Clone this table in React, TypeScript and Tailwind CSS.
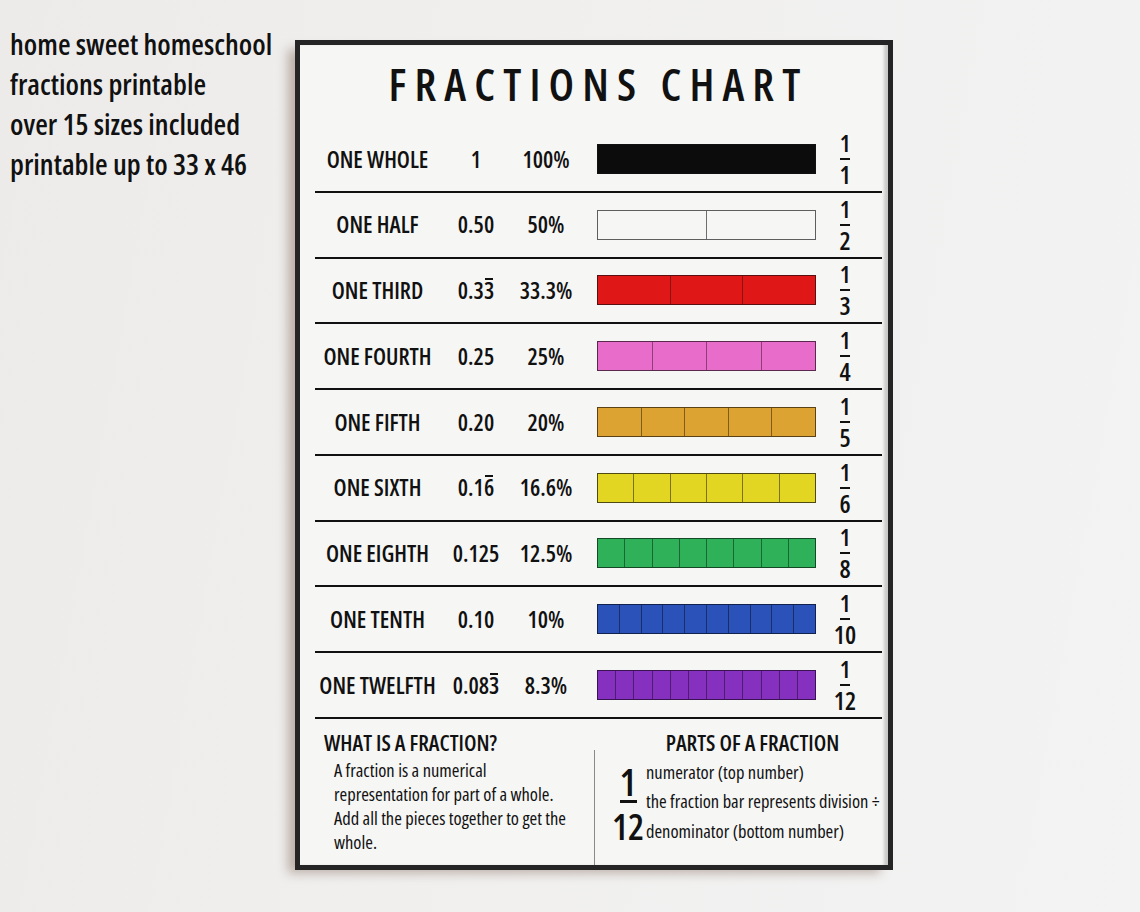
import React from "react";

type Row = {
  name: string;
  dec: React.ReactNode;
  pct: string;
  n: number;
  fill: string;
  edge: string;
  seg: string;
  den: string;
};

function Over({ d }: { d: string }) {
  return (
    <span className="relative inline-block">
      {d}
      <span className="absolute left-[1px] right-[1px] top-[5px] h-[2px] bg-[#111]" />
    </span>
  );
}

const rows: Row[] = [
  { name: "ONE WHOLE", dec: "1", pct: "100%", n: 1, fill: "bg-[#0c0c0c]", edge: "border-[#111]", seg: "border-[#111]", den: "1" },
  { name: "ONE HALF", dec: "0.50", pct: "50%", n: 2, fill: "bg-[#f6f6f4]", edge: "border-[#5e5e5e]", seg: "border-[#6e6e6e]", den: "2" },
  { name: "ONE THIRD", dec: <>0.3<Over d="3" /></>, pct: "33.3%", n: 3, fill: "bg-[#e01717]", edge: "border-[#5a1010]", seg: "border-[#8a1414]", den: "3" },
  { name: "ONE FOURTH", dec: "0.25", pct: "25%", n: 4, fill: "bg-[#e86cc9]", edge: "border-[#5a2a4e]", seg: "border-[#8c3f78]", den: "4" },
  { name: "ONE FIFTH", dec: "0.20", pct: "20%", n: 5, fill: "bg-[#dca232]", edge: "border-[#5a4214]", seg: "border-[#7e5c1c]", den: "5" },
  { name: "ONE SIXTH", dec: <>0.1<Over d="6" /></>, pct: "16.6%", n: 6, fill: "bg-[#e2d622]", edge: "border-[#4f4a10]", seg: "border-[#7a7214]", den: "6" },
  { name: "ONE EIGHTH", dec: "0.125", pct: "12.5%", n: 8, fill: "bg-[#2fb15a]", edge: "border-[#134a25]", seg: "border-[#1c6634]", den: "8" },
  { name: "ONE TENTH", dec: "0.10", pct: "10%", n: 10, fill: "bg-[#2a52b9]", edge: "border-[#12224e]", seg: "border-[#182f6a]", den: "10" },
  { name: "ONE TWELFTH", dec: <>0.08<Over d="3" /></>, pct: "8.3%", n: 12, fill: "bg-[#8630c0]", edge: "border-[#3a1452]", seg: "border-[#4f1c70]", den: "12" },
];

function Bar({ r }: { r: Row }) {
  return (
    <div className={`ml-[17px] flex h-[30px] w-[219px] shrink-0 border ${r.edge} ${r.fill}`}>
      {Array.from({ length: r.n }).map((_, i) => (
        <div key={i} className={`flex-1 ${i > 0 ? `border-l ${r.seg}` : ""}`} />
      ))}
    </div>
  );
}

function Frac({ den }: { den: string }) {
  return (
    <div className="flex w-[58px] shrink-0 flex-col items-center">
      <div className="text-[24px] leading-[22px]">1</div>
      <div className="mt-[4px] h-[2px] w-[10px] bg-[#111]" />
      <div className="mt-[3px] text-[25px] leading-[23px]">{den}</div>
    </div>
  );
}

export default function App() {
  return (
    <div className="flex h-[912px] w-full items-start overflow-hidden bg-[linear-gradient(100deg,#ecebea_0%,#f0efee_40%,#f3f3f3_100%)] font-['Open_Sans',sans-serif] font-semibold text-[#111] [font-stretch:75%]">
      <div className="w-[295px] shrink-0 pl-[10px] pt-[24px] text-[29px] leading-[40px]">
        <div>home sweet homeschool</div>
        <div>fractions printable</div>
        <div>over 15 sizes included</div>
        <div>printable up to 33 x 46</div>
      </div>

      <div className="mt-[40px] h-[830px] w-[598px] shrink-0 border-[5px] border-[#252525] shadow-[-10px_6px_10px_-3px_rgba(110,80,60,0.4)]">
        <div className="flex h-full flex-col bg-[#f6f6f5] pl-[15px] pr-[6px] shadow-[inset_-5px_0_3px_-1px_rgba(0,0,0,0.18)]">
          <div className="pt-[16px] text-center text-[45px] leading-[46px] tracking-[0.18em] [font-stretch:80%]">
            FRACTIONS CHART
          </div>

          <div className="mt-[20px] flex flex-col">
            {rows.map((r) => (
              <div key={r.name} className="flex h-[65.75px] items-center border-b-2 border-[#111] text-[23px] font-[550]">
                <div className="w-[125px] shrink-0 text-center">{r.name}</div>
                <div className="w-[72px] shrink-0 text-center">{r.dec}</div>
                <div className="w-[68px] shrink-0 text-center">{r.pct}</div>
                <Bar r={r} />
                <Frac den={r.den} />
              </div>
            ))}
          </div>

          <div className="flex flex-1">
            <div className="w-[279px] shrink-0 pl-[9px] pt-[9px]">
              <div className="text-[22px] font-[550] leading-[28px]">WHAT IS A FRACTION?</div>
              <div className="mt-[2px] whitespace-nowrap pl-[10px] text-[18.5px] font-medium leading-[24px]">
                <div>A fraction is a numerical</div>
                <div>representation for part of a whole.</div>
                <div>Add all the pieces together to get the</div>
                <div>whole.</div>
              </div>
            </div>
            <div className="mt-[31px] w-px shrink-0 bg-[#8a8a8a]" />
            <div className="min-w-0 flex-1 pt-[9px]">
              <div className="pl-[28px] text-center text-[22px] font-[550] leading-[28px]">PARTS OF A FRACTION</div>
              <div className="mt-[1px] flex items-start pl-[20px]">
                <div className="mt-[9px] flex w-[26px] shrink-0 flex-col items-center">
                  <div className="text-[38px] leading-[30px]">1</div>
                  <div className="mt-[4px] h-[3px] w-[17px] bg-[#111]" />
                  <div className="mt-[9px] text-[36px] leading-[30px]">12</div>
                </div>
                <div className="ml-[5px] whitespace-nowrap text-[18.5px] font-medium leading-[29.5px]">
                  <div>numerator (top number)</div>
                  <div>the fraction bar represents division ÷</div>
                  <div>denominator (bottom number)</div>
                </div>
              </div>
            </div>
          </div>
        </div>
      </div>
    </div>
  );
}
